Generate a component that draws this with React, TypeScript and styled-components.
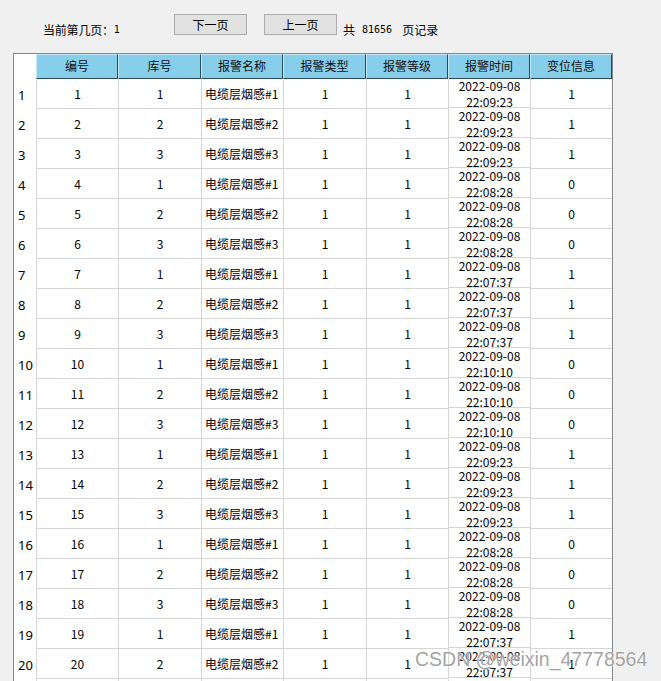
import React from "react";
import styled, { createGlobalStyle } from "styled-components";

const Global = createGlobalStyle`
  html, body {
    margin: 0;
    padding: 0;
    background: #f0f0f0;
    overflow: hidden;
  }
  body {
    font-family: "Noto Sans CJK SC", "Noto Sans", sans-serif;
    color: #000;
  }
`;

const Page = styled.div`
  position: relative;
  width: 661px;
  height: 681px;
  overflow: hidden;
  background: #f0f0f0;
`;

const Toolbar = styled.div`
  display: flex;
  align-items: flex-start;
  height: 53px;
  padding-left: 43px;
  box-sizing: border-box;
`;

const PageInfo = styled.div`
  width: 131px;
  margin-top: 23px;
  font-size: 12px;
  line-height: 14px;
  white-space: nowrap;
  display: flex;
`;

const PageLabel = styled.span`
  letter-spacing: -0.2px;
`;

const PageNum = styled.span`
  font-family: "DejaVu Sans Mono", monospace;
  font-size: 10px;
`;

const NavButton = styled.button<{ $gap: number }>`
  width: 73px;
  height: 21px;
  margin-top: 14px;
  margin-right: ${(p) => p.$gap}px;
  padding: 0;
  background: #e1e1e1;
  border: 1px solid #adadad;
  border-radius: 0;
  font-family: "Noto Sans CJK SC", "Noto Sans", sans-serif;
  font-size: 12px;
  line-height: 19px;
  color: #000;
`;

const Count = styled.div`
  margin-top: 23px;
  font-size: 12px;
  line-height: 14px;
  white-space: nowrap;
  display: flex;
`;

const CountNum = styled.span`
  font-family: "DejaVu Sans Mono", monospace;
  font-size: 10px;
  margin: 0 10px 0 7px;
`;

const TableWrap = styled.div`
  margin-left: 13px;
  width: 600px;
  border: 1px solid #828790;
  border-bottom: none;
  box-sizing: border-box;
  background: #fff;
`;

const Grid = styled.div`
  display: grid;
  grid-template-columns: 22px 82px 83px 82px 83px 82px 82px 82px;
`;

const Corner = styled.div`
  height: 25px;
  background: #fff;
`;

const HeadCell = styled.div`
  height: 25px;
  box-sizing: border-box;
  background: #87ceeb;
  border-left: 1px solid #c4e8f6;
  border-top: 1px solid #c4e8f6;
  border-right: 1px solid #2c4a58;
  border-bottom: 1px solid #2c4a58;
  font-size: 12px;
  line-height: 22px;
  text-align: center;
  color: #111;
`;

const RowHead = styled.div`
  height: 30px;
  box-sizing: border-box;
  padding-left: 4px;
  padding-top: 2px;
  font-family: "Noto Sans", sans-serif;
  font-size: 13px;
  line-height: 28px;
  background: #fff;
`;

const Cell = styled.div<{ $align?: "left" | "center" }>`
  height: 30px;
  box-sizing: border-box;
  border-left: 1px solid #d6d6d6;
  border-bottom: 1px solid #d6d6d6;
  font-size: 12px;
  line-height: 29px;
  text-align: ${(p) => p.$align ?? "center"};
  padding-left: ${(p) => (p.$align === "left" ? "3px" : "0")};
  white-space: nowrap;
  background: #fff;
`;

const TimeCell = styled.div`
  height: 30px;
  box-sizing: border-box;
  border-left: 1px solid #d6d6d6;
  border-bottom: 1px solid #d6d6d6;
  font-size: 12px;
  line-height: 16px;
  text-align: center;
  white-space: nowrap;
  display: flex;
  flex-direction: column;
  align-items: center;
  justify-content: flex-start;
  margin-top: -1px;
  position: relative;
  z-index: 1;
  background: transparent;
`;

const Watermark = styled.div`
  position: absolute;
  left: 415px;
  top: 648px;
  font-family: "Liberation Sans", Arial, sans-serif;
  font-size: 19.5px;
  color: rgba(120, 120, 120, 0.7);
  text-shadow: 0 0 2px #fff, 0 0 1px #fff;
  white-space: nowrap;
  z-index: 5;
`;

const headers = ["编号", "库号", "报警名称", "报警类型", "报警等级", "报警时间", "变位信息"];
const times = ["22:09:23", "22:08:28", "22:07:37", "22:10:10"];
const bits = [1, 0, 1, 0];

type Row = { id: number; store: number; time: string; bit: number };

const rows: Row[] = Array.from({ length: 20 }, (_, i) => {
  const g = Math.floor(i / 3);
  return {
    id: i + 1,
    store: (i % 3) + 1,
    time: times[g % 4],
    bit: bits[g % 4],
  };
});

export default function App() {
  return (
    <Page>
      <Global />
      <Toolbar>
        <PageInfo>
          <PageLabel>当前第几页：</PageLabel>
          <PageNum>1</PageNum>
        </PageInfo>
        <NavButton $gap={17}>下一页</NavButton>
        <NavButton $gap={6}>上一页</NavButton>
        <Count>
          共<CountNum>81656</CountNum>页记录
        </Count>
      </Toolbar>
      <TableWrap>
        <Grid>
          <Corner />
          {headers.map((h) => (
            <HeadCell key={h}>{h}</HeadCell>
          ))}
          {rows.map((r) => (
            <React.Fragment key={r.id}>
              <RowHead>{r.id}</RowHead>
              <Cell>{r.id}</Cell>
              <Cell>{r.store}</Cell>
              <Cell $align="left">电缆层烟感#{r.store}</Cell>
              <Cell>1</Cell>
              <Cell>1</Cell>
              <TimeCell>
                <span>2022-09-08</span>
                <span>{r.time}</span>
              </TimeCell>
              <Cell>{r.bit}</Cell>
            </React.Fragment>
          ))}
          <RowHead />
          {headers.map((h) => (
            <Cell key={`pad-${h}`} />
          ))}
        </Grid>
      </TableWrap>
      <Watermark>CSDN @weixin_47778564</Watermark>
    </Page>
  );
}
